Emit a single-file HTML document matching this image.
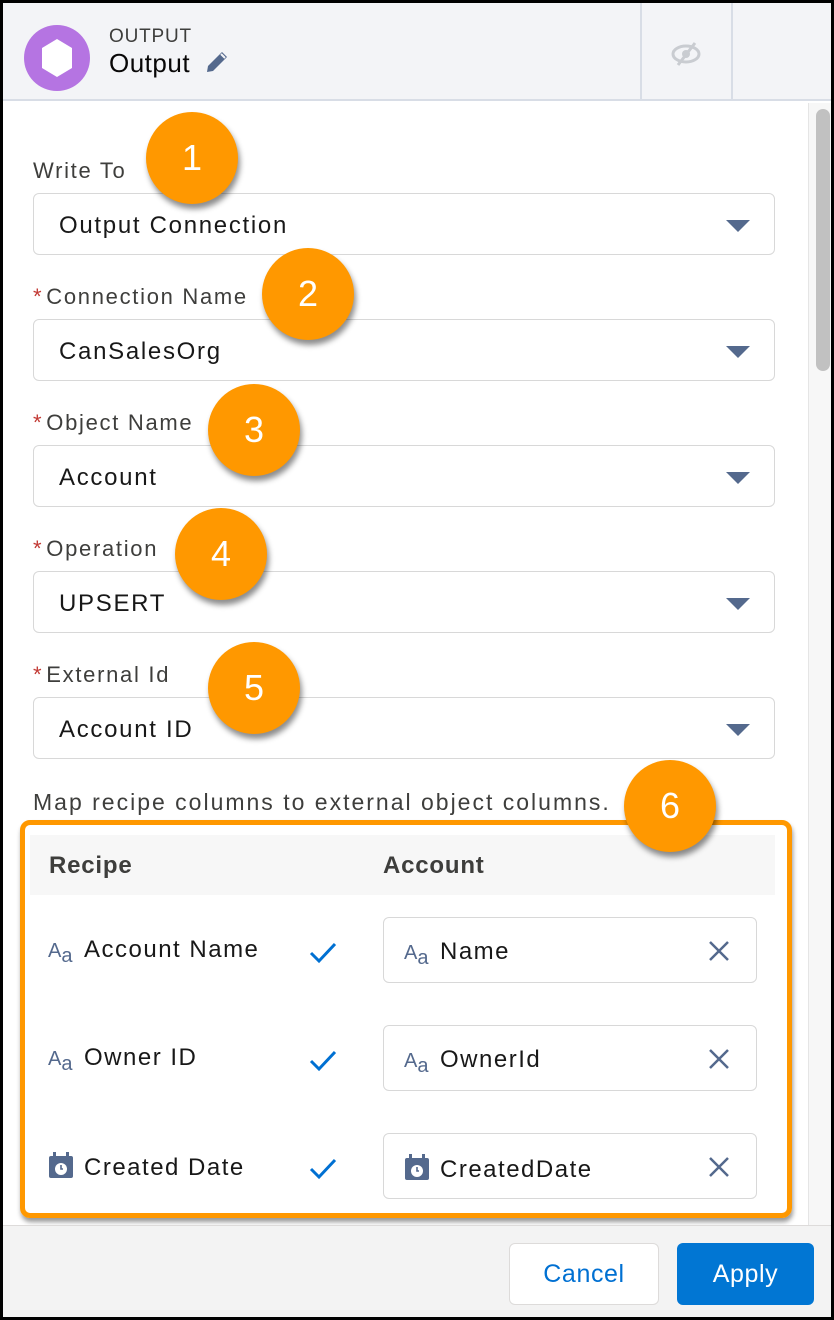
<!DOCTYPE html>
<html><head><meta charset="utf-8"><style>
*{box-sizing:border-box;margin:0;padding:0}
body{width:834px;height:1320px;overflow:hidden;font-family:"Liberation Sans",sans-serif;background:#000;position:relative}
.frame{position:absolute;left:3px;top:3px;width:828px;height:1314px;background:#fff;overflow:hidden}
.hdr{position:absolute;left:0;top:0;width:828px;height:98px;background:#f3f4f7;border-bottom:2px solid #d8dde6}
.abs{position:absolute}
.lbl{position:absolute;left:30px;font-size:22px;color:#3e3e3c;letter-spacing:1.7px}
.req{color:#c23934;margin-right:3px}
.sel{position:absolute;left:30px;width:742px;height:62px;border:1.5px solid #d8d8d8;border-radius:6px;font-size:24px;color:#181818;padding:18px 0 0 25px;letter-spacing:1.7px}
.sel:after{content:"";position:absolute;right:24px;top:26px;border-left:12px solid transparent;border-right:12px solid transparent;border-top:12px solid #54698d}
.badge{position:absolute;width:92px;height:92px;border-radius:50%;background:#ff9800;color:#fff;font-size:36px;text-align:center;line-height:92px;box-shadow:2px 5px 6px rgba(0,0,0,.45)}
.row{position:absolute;left:45px;font-size:24px;color:#181818;letter-spacing:1.5px}
.map{position:absolute;left:380px;width:374px;height:66px;border:1.5px solid #d8d8d8;border-radius:6px;font-size:24px;color:#181818;letter-spacing:1.5px}
.aa{font-size:20px;color:#54698d;display:inline-block;width:36px;position:relative;letter-spacing:0}
.aa sub{font-size:20px;position:relative;top:5px;vertical-align:baseline}
.x{position:absolute;right:26px;top:22px}
.ck{position:absolute;left:305px}
</style></head><body><div class="frame">
<div class="hdr">
 <svg class="abs" style="left:21px;top:22px" width="66" height="66"><circle cx="33" cy="33" r="33" fill="#b574e2"/><polygon points="33,14 48,23 48,43 33,52 18,43 18,23" fill="#fff"/></svg>
 <div class="abs" style="left:106px;top:23px;font-size:19px;color:#3e3e3c;letter-spacing:.8px">OUTPUT</div>
 <div class="abs" style="left:106px;top:45px;font-size:26px;color:#080707;letter-spacing:.5px">Output</div>
 <svg class="abs" style="left:200px;top:45px" width="28" height="28" viewBox="0 0 28 28"><path d="M4 24 L5 18 L19 4 L24 9 L10 23 Z" fill="#54698d"/><path d="M18 6 L22 10" stroke="#f3f4f7" stroke-width="2"/></svg>
 <div class="abs" style="left:637px;top:0;width:1.5px;height:98px;background:#d8dde6"></div>
 <div class="abs" style="left:728px;top:0;width:1.5px;height:98px;background:#d8dde6"></div>
 <svg class="abs" style="left:667px;top:38px" width="32" height="26" viewBox="0 0 32 26"><ellipse cx="16" cy="13" rx="13" ry="8" fill="none" stroke="#c9ccd1" stroke-width="3"/><circle cx="16" cy="13" r="4" fill="#c9ccd1"/><path d="M25 2 L8 24" stroke="#c9ccd1" stroke-width="3"/></svg>
</div>
<div class="abs" style="left:805px;top:100px;width:23px;height:1122px;background:#f7f7f7;border-left:1px solid #e5e5e5"></div>
<div class="abs" style="left:813px;top:106px;width:14px;height:262px;background:#c1c1c1;border-radius:7px"></div>

<div class="lbl" style="top:155px">Write To</div>
<div class="sel" style="top:190px">Output Connection</div>
<div class="lbl" style="top:281px"><span class="req">*</span>Connection Name</div>
<div class="sel" style="top:316px">CanSalesOrg</div>
<div class="lbl" style="top:407px"><span class="req">*</span>Object Name</div>
<div class="sel" style="top:442px">Account</div>
<div class="lbl" style="top:533px"><span class="req">*</span>Operation</div>
<div class="sel" style="top:568px">UPSERT</div>
<div class="lbl" style="top:659px"><span class="req">*</span>External Id</div>
<div class="sel" style="top:694px">Account ID</div>
<div class="lbl" style="top:786px;font-size:23px;letter-spacing:2px">Map recipe columns to external object columns.</div>

<div class="abs" style="left:17px;top:817px;width:772px;height:398px;border:5px solid #ff9800;border-radius:10px;box-shadow:1px 4px 5px rgba(0,0,0,.4)"></div>
<div class="abs" style="left:27px;top:832px;width:745px;height:60px;background:#f7f7f7"></div>
<div class="abs" style="left:46px;top:849px;font-size:24px;font-weight:bold;color:#3e3e3c;letter-spacing:.8px">Recipe</div>
<div class="abs" style="left:380px;top:849px;font-size:24px;font-weight:bold;color:#3e3e3c;letter-spacing:.8px">Account</div>

<div class="row" style="top:933px"><span class="aa">A<sub>a</sub></span>Account Name</div>
<div class="row" style="top:1041px"><span class="aa">A<sub>a</sub></span>Owner ID</div>
<div class="row" style="top:1148px"><svg width="26" height="28" style="vertical-align:-4px;margin-right:10px" viewBox="0 0 26 28"><rect x="1" y="5" width="24" height="22" rx="2" fill="#54698d"/><rect x="5" y="1" width="3" height="6" fill="#54698d"/><rect x="18" y="1" width="3" height="6" fill="#54698d"/><circle cx="13" cy="18" r="6" fill="#fff"/><path d="M13 14v4h2" stroke="#54698d" stroke-width="1.6" fill="none"/></svg>Created Date</div>
<svg class="ck" style="top:938px" width="30" height="24"><path d="M3 12 L11 20 L27 3" stroke="#0070d2" stroke-width="3" fill="none"/></svg>
<svg class="ck" style="top:1046px" width="30" height="24"><path d="M3 12 L11 20 L27 3" stroke="#0070d2" stroke-width="3" fill="none"/></svg>
<svg class="ck" style="top:1154px" width="30" height="24"><path d="M3 12 L11 20 L27 3" stroke="#0070d2" stroke-width="3" fill="none"/></svg>

<div class="map" style="top:914px;padding:20px 0 0 20px"><span class="aa">A<sub>a</sub></span>Name<svg class="x" width="22" height="22"><path d="M2 2L20 20M20 2L2 20" stroke="#54698d" stroke-width="2.5"/></svg></div>
<div class="map" style="top:1022px;padding:20px 0 0 20px"><span class="aa">A<sub>a</sub></span>OwnerId<svg class="x" width="22" height="22"><path d="M2 2L20 20M20 2L2 20" stroke="#54698d" stroke-width="2.5"/></svg></div>
<div class="map" style="top:1130px;padding:19px 0 0 20px"><svg width="26" height="28" style="vertical-align:-4px;margin-right:10px" viewBox="0 0 26 28"><rect x="1" y="5" width="24" height="22" rx="2" fill="#54698d"/><rect x="5" y="1" width="3" height="6" fill="#54698d"/><rect x="18" y="1" width="3" height="6" fill="#54698d"/><circle cx="13" cy="18" r="6" fill="#fff"/><path d="M13 14v4h2" stroke="#54698d" stroke-width="1.6" fill="none"/></svg>CreatedDate<svg class="x" width="22" height="22"><path d="M2 2L20 20M20 2L2 20" stroke="#54698d" stroke-width="2.5"/></svg></div>

<div class="abs" style="left:0;top:1222px;width:828px;height:92px;background:#f3f3f3;border-top:1.5px solid #dddbda"></div>
<div class="abs" style="left:506px;top:1240px;width:150px;height:62px;background:#fff;border:1.5px solid #dddbda;border-radius:6px;color:#0070d2;font-size:25px;text-align:center;line-height:60px;letter-spacing:.6px">Cancel</div>
<div class="abs" style="left:674px;top:1240px;width:137px;height:62px;background:#0176d3;border-radius:6px;color:#fff;font-size:25px;text-align:center;line-height:62px;letter-spacing:.6px">Apply</div>

<div class="badge" style="left:143px;top:109px">1</div>
<div class="badge" style="left:259px;top:245px">2</div>
<div class="badge" style="left:205px;top:381px">3</div>
<div class="badge" style="left:172px;top:505px">4</div>
<div class="badge" style="left:205px;top:639px">5</div>
<div class="badge" style="left:621px;top:757px">6</div>
</div></body></html>
